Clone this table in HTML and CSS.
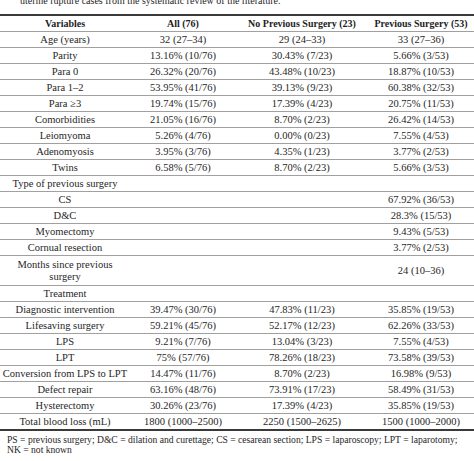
FILE: index.html
```html
<!DOCTYPE html>
<html>
<head>
<meta charset="utf-8">
<link rel="stylesheet" href="styles.css">
</head>
<body>
<div class="page">
  <p class="caption">uterine rupture cases from the systematic review of the literature.</p>
  <table class="data">
    <colgroup>
      <col class="c1"><col class="c2"><col class="c3"><col class="c4">
    </colgroup>
    <thead>
      <tr><th>Variables</th><th>All (76)</th><th>No Previous Surgery (23)</th><th>Previous Surgery (53)</th></tr>
    </thead>
    <tbody>
      <tr><td>Age (years)</td><td>32 (27–34)</td><td>29 (24–33)</td><td>33 (27–36)</td></tr>
      <tr><td>Parity</td><td>13.16% (10/76)</td><td>30.43% (7/23)</td><td>5.66% (3/53)</td></tr>
      <tr><td>Para 0</td><td>26.32% (20/76)</td><td>43.48% (10/23)</td><td>18.87% (10/53)</td></tr>
      <tr><td>Para 1–2</td><td>53.95% (41/76)</td><td>39.13% (9/23)</td><td>60.38% (32/53)</td></tr>
      <tr><td>Para ≥3</td><td>19.74% (15/76)</td><td>17.39% (4/23)</td><td>20.75% (11/53)</td></tr>
      <tr><td>Comorbidities</td><td>21.05% (16/76)</td><td>8.70% (2/23)</td><td>26.42% (14/53)</td></tr>
      <tr><td>Leiomyoma</td><td>5.26% (4/76)</td><td>0.00% (0/23)</td><td>7.55% (4/53)</td></tr>
      <tr><td>Adenomyosis</td><td>3.95% (3/76)</td><td>4.35% (1/23)</td><td>3.77% (2/53)</td></tr>
      <tr><td>Twins</td><td>6.58% (5/76)</td><td>8.70% (2/23)</td><td>5.66% (3/53)</td></tr>
      <tr><td>Type of previous surgery</td><td></td><td></td><td></td></tr>
      <tr><td>CS</td><td></td><td></td><td>67.92% (36/53)</td></tr>
      <tr><td>D&amp;C</td><td></td><td></td><td>28.3% (15/53)</td></tr>
      <tr><td>Myomectomy</td><td></td><td></td><td>9.43% (5/53)</td></tr>
      <tr><td>Cornual resection</td><td></td><td></td><td>3.77% (2/53)</td></tr>
      <tr class="tall"><td>Months since previous<br>surgery</td><td></td><td></td><td>24 (10–36)</td></tr>
      <tr><td>Treatment</td><td></td><td></td><td></td></tr>
      <tr><td>Diagnostic intervention</td><td>39.47% (30/76)</td><td>47.83% (11/23)</td><td>35.85% (19/53)</td></tr>
      <tr><td>Lifesaving surgery</td><td>59.21% (45/76)</td><td>52.17% (12/23)</td><td>62.26% (33/53)</td></tr>
      <tr><td>LPS</td><td>9.21% (7/76)</td><td>13.04% (3/23)</td><td>7.55% (4/53)</td></tr>
      <tr><td>LPT</td><td>75% (57/76)</td><td>78.26% (18/23)</td><td>73.58% (39/53)</td></tr>
      <tr><td>Conversion from LPS to LPT</td><td>14.47% (11/76)</td><td>8.70% (2/23)</td><td>16.98% (9/53)</td></tr>
      <tr><td>Defect repair</td><td>63.16% (48/76)</td><td>73.91% (17/23)</td><td>58.49% (31/53)</td></tr>
      <tr><td>Hysterectomy</td><td>30.26% (23/76)</td><td>17.39% (4/23)</td><td>35.85% (19/53)</td></tr>
      <tr><td>Total blood loss (mL)</td><td>1800 (1000–2500)</td><td>2250 (1500–2625)</td><td>1500 (1000–2000)</td></tr>
    </tbody>
  </table>
  <p class="note">PS = previous surgery; D&amp;C = dilation and curettage; CS = cesarean section; LPS = laparoscopy; LPT = laparotomy;<br>NK = not known</p>
</div>
</body>
</html>
```

FILE: styles.css
```css
html, body {
  margin: 0;
  padding: 0;
  background: #ffffff;
}
.page {
  width: 474px;
  height: 461px;
  overflow: hidden;
  font-family: "Liberation Serif", "Times New Roman", serif;
  color: #262626;
}
.caption {
  margin: -5px 0 7px 20px;
  font-size: 10px;
  line-height: 12px;
  white-space: nowrap;
}
.data {
  width: 474px;
  border-collapse: collapse;
  table-layout: fixed;
  border-top: 2px solid #3a3a3a;
  border-bottom: 2px solid #3a3a3a;
}
.c1 { width: 130px; }
.c2 { width: 106px; }
.c3 { width: 132px; }
.c4 { width: 106px; }
.data th,
.data td {
  text-align: center;
  font-size: 10.5px;
  line-height: 12px;
  height: 12px;
  padding: 2px 2px 1px;
  border-bottom: 1px solid #a0a0a0;
  white-space: nowrap;
}
.data th {
  font-size: 10px;
  font-weight: bold;
  color: #1e1e1e;
}
.data .tall td {
  padding-top: 3px;
  padding-bottom: 2px;
}
.data tbody tr:last-child td {
  border-bottom: none;
}
.note {
  margin: 4px 0 0 7px;
  font-size: 9.6px;
  line-height: 10px;
  white-space: nowrap;
}
```
